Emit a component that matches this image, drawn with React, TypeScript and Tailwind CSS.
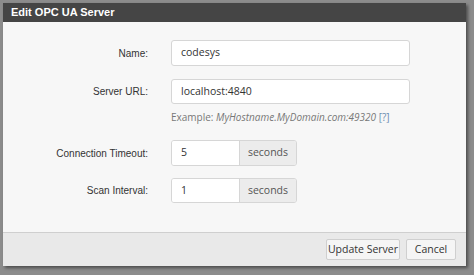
import type { ReactNode } from "react";

const labelFont = { fontFamily: '"Liberation Sans", Arial, sans-serif' };
const fieldFont = { fontFamily: '"Open Sans", "Liberation Sans", sans-serif' };

function Field({ label, children }: { label: string; children: ReactNode }) {
  return (
    <div className="flex items-center">
      <div
        className="w-[145px] shrink-0 text-right text-[10px] text-[#333]"
        style={labelFont}
      >
        {label}
      </div>
      <div className="ml-[23px]">{children}</div>
    </div>
  );
}

function TextBox({ value, height }: { value: string; height: string }) {
  return (
    <div
      className={`flex w-[239px] items-center rounded-[3px] border border-[#d6d6d6] bg-white pl-[9px] text-[10.5px] text-[#333] ${height}`}
      style={fieldFont}
    >
      {value}
    </div>
  );
}

function SecondsBox({ value, height }: { value: string; height: string }) {
  return (
    <div
      className={`flex w-[126px] overflow-hidden rounded-[3px] border border-[#d6d6d6] text-[10.5px] ${height}`}
      style={fieldFont}
    >
      <div className="flex w-[67px] items-center bg-white pl-[9px] text-[#333]">{value}</div>
      <div className="flex flex-1 items-center justify-center border-l border-[#d6d6d6] bg-[#ececec] text-[#555]">
        seconds
      </div>
    </div>
  );
}

export default function App() {
  return (
    <div className="h-[275px] w-[474px] bg-[#8c8c8c] pl-[3px] pt-[3px]">
      <div className="flex h-[263px] w-[463px] flex-col shadow-[2px_2px_3px_rgba(0,0,0,0.45)]">
        <div
          className="flex h-[19px] items-center bg-[#454545] pl-[8px] text-[11px] font-bold text-white"
          style={labelFont}
        >
          Edit OPC UA Server
        </div>

        <div className="flex flex-1 flex-col bg-[#f7f7f7] pt-[18px]">
          <Field label="Name:">
            <TextBox value="codesys" height="h-[26px]" />
          </Field>
          <div className="mt-[13px]">
            <Field label="Server URL:">
              <TextBox value="localhost:4840" height="h-[25px]" />
            </Field>
          </div>
          <div
            className="ml-[168px] mt-[6px] text-[10px] leading-[14px] text-[#777]"
            style={fieldFont}
          >
            Example: <span className="italic">MyHostname.MyDomain.com:49320</span>{" "}
            <span className="text-[#6a8caf]">[?]</span>
          </div>
          <div className="mt-[16px]">
            <Field label="Connection Timeout:">
              <SecondsBox value="5" height="h-[26px]" />
            </Field>
          </div>
          <div className="mt-[12px]">
            <Field label="Scan Interval:">
              <SecondsBox value="1" height="h-[25px]" />
            </Field>
          </div>
        </div>

        <div
          className="flex h-[34px] items-center justify-end gap-[6px] border-t border-[#cfcfcf] bg-[#e9e9e9] pr-[10px] text-[10.5px] text-[#333]"
          style={fieldFont}
        >
          <button className="h-[21px] w-[74px] whitespace-nowrap rounded-[2px] border border-[#cfcfcf] bg-[#f5f5f5] px-0">
            Update Server
          </button>
          <button className="h-[21px] w-[50px] whitespace-nowrap rounded-[2px] border border-[#cfcfcf] bg-[#f5f5f5] px-0">
            Cancel
          </button>
        </div>
      </div>
    </div>
  );
}
